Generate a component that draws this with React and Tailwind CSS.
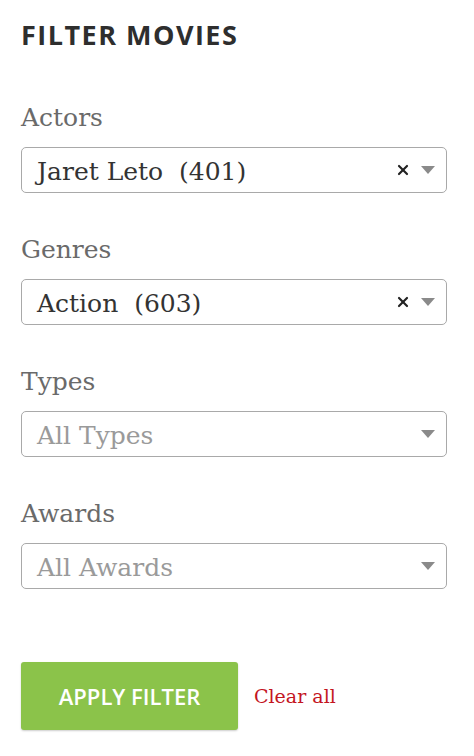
import { X } from "lucide-react"

const filters = [
  { label: "Actors", value: "Jaret Leto  (401)" },
  { label: "Genres", value: "Action  (603)" },
  { label: "Types", placeholder: "All Types" },
  { label: "Awards", placeholder: "All Awards" },
]

function Caret() {
  return (
    <svg width="14" height="8" viewBox="0 0 14 8" className="shrink-0">
      <path d="M0 0 L14 0 L7 8 Z" fill="#8a8a8a" />
    </svg>
  )
}

function Select({ value, placeholder }) {
  return (
    <div className="flex h-[46px] items-center rounded-[5px] border border-[#a9a9a9] bg-white pl-[15px] pr-[11px]">
      <span
        className={`flex-1 whitespace-pre pt-[2px] text-[25px] leading-none ${value ? "text-[#333]" : "text-[#9a9a9a]"}`}
      >
        {value || placeholder}
      </span>
      {value && <X size={16} strokeWidth={3.2} className="mr-[10px] text-[#222]" />}
      <Caret />
    </div>
  )
}

export default function App() {
  return (
    <div className="min-h-screen bg-white pl-[21px] pr-[27px] pt-[21px] font-['DejaVu_Serif',serif]">
      <h1 className="font-['Open_Sans',sans-serif] text-[27px] font-bold leading-none tracking-[0.055em] text-[#2e2e2e]">
        FILTER MOVIES
      </h1>

      <div className="mt-[55px] flex flex-col gap-[42px]">
        {filters.map((f) => (
          <div key={f.label} className="flex flex-col gap-[14px]">
            <label className="text-[25px] leading-[30px] text-[#6a6a6a]">{f.label}</label>
            <Select value={f.value} placeholder={f.placeholder} />
          </div>
        ))}
      </div>

      <div className="mt-[73px] flex items-center gap-[16px]">
        <button className="h-[68px] w-[217px] rounded-[3px] bg-[#8bc34a] font-['Open_Sans',sans-serif] text-[22px] font-semibold text-white shadow-[0_1px_2px_rgba(0,0,0,0.2)]">
          APPLY FILTER
        </button>
        <a href="#" className="text-[19px] text-[#c4151f]">
          Clear all
        </a>
      </div>
    </div>
  )
}
